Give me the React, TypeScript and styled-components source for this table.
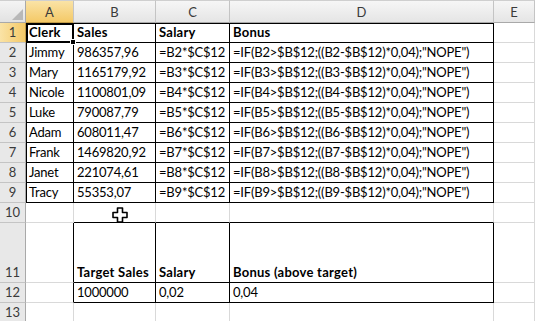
import React from "react";
import styled, { createGlobalStyle } from "styled-components";

const Global = createGlobalStyle`
  *, *::before, *::after { box-sizing: border-box; }
  html, body { margin: 0; padding: 0; background: #fff; overflow: hidden; }
  body { font-family: Lato, "Liberation Sans", sans-serif; }
`;

const GRID = "#d9d9d9";
const BLACK = "#000";
const HEAD_LINE = "#c4c4c4";
const HEAD_EDGE = "#a9a9a9";

const Sheet = styled.div`
  display: grid;
  grid-template-columns: 26px 48px 82px 74px 264px 1fr;
  grid-template-rows: 23px repeat(10, 20px) 60px 20px 20px;
  width: 535px;
  height: 321px;
  overflow: hidden;
  font-size: 13px;
  color: #000;
`;

const Corner = styled.div`
  position: relative;
  background: linear-gradient(#f4f4f4, #e2e2e2);
  border-top: 1px solid #cfcfcf;
  border-right: 1px solid ${HEAD_EDGE};
  border-bottom: 1px solid ${HEAD_EDGE};
  &::after {
    content: "";
    position: absolute;
    right: 2px;
    bottom: 2px;
    width: 0;
    height: 0;
    border-left: 11px solid transparent;
    border-bottom: 11px solid #b8b8b8;
  }
`;

const ColHeader = styled.div<{ $active?: boolean }>`
  display: flex;
  align-items: center;
  justify-content: center;
  padding-top: 1px;
  background: ${(p) =>
    p.$active
      ? "linear-gradient(#fae3a6, #f4c967)"
      : "linear-gradient(#f6f6f6, #e5e5e5)"};
  border-top: 1px solid #cfcfcf;
  border-right: 1px solid ${HEAD_LINE};
  border-bottom: 1px solid ${(p) => (p.$active ? "#c29b46" : HEAD_EDGE)};
  color: #3a3a3a;
  font-size: 13px;
`;

const RowHeader = styled.div<{ $active?: boolean }>`
  display: flex;
  align-items: flex-end;
  justify-content: center;
  padding-bottom: 2px;
  background: ${(p) =>
    p.$active ? "linear-gradient(90deg, #fae3a6, #f4c967)" : "#e8e8e8"};
  border-right: 1px solid ${(p) => (p.$active ? "#c29b46" : HEAD_EDGE)};
  border-bottom: 1px solid ${HEAD_LINE};
  color: #3a3a3a;
  font-size: 13px;
`;

const Cell = styled.div<{
  $r: string;
  $b: string;
  $t?: boolean;
  $l?: boolean;
  $bold?: boolean;
}>`
  position: relative;
  display: flex;
  align-items: flex-end;
  min-width: 0;
  padding: 0 3px 2px 3px;
  line-height: 15px;
  white-space: nowrap;
  border-right: 1px solid ${(p) => p.$r};
  border-bottom: 1px solid ${(p) => p.$b};
  box-shadow: ${(p) => {
    const s: string[] = [];
    if (p.$t) s.push(`inset 0 1px 0 ${BLACK}`);
    if (p.$l) s.push(`inset 1px 0 0 ${BLACK}`);
    return s.length ? s.join(", ") : "none";
  }};
  font-weight: ${(p) => (p.$bold ? 700 : 400)};
  letter-spacing: ${(p) => (p.$bold ? "0.25px" : "-0.2px")};
`;

const Selection = styled.span`
  position: absolute;
  left: 0;
  top: 0;
  right: -1px;
  bottom: -1px;
  border: 2px solid #000;
  pointer-events: none;
  z-index: 2;
`;

const FillHandle = styled.span`
  position: absolute;
  right: -3px;
  bottom: -3px;
  width: 6px;
  height: 6px;
  background: #000;
  border: 1px solid #fff;
  z-index: 3;
`;

const Cursor = styled.svg`
  position: absolute;
  left: 38px;
  top: 4px;
  z-index: 4;
`;

type CellData = { text?: string; bold?: boolean };

const cols = ["A", "B", "C", "D", "E"];

const names = ["Jimmy", "Mary", "Nicole", "Luke", "Adam", "Frank", "Janet", "Tracy"];
const sales = [
  "986357,96",
  "1165179,92",
  "1100801,09",
  "790087,79",
  "608011,47",
  "1469820,92",
  "221074,61",
  "55353,07",
];

const rows: CellData[][] = [];
rows.push([
  { text: "Clerk", bold: true },
  { text: "Sales", bold: true },
  { text: "Salary", bold: true },
  { text: "Bonus", bold: true },
  {},
]);
names.forEach((n, i) => {
  const r = i + 2;
  rows.push([
    { text: n },
    { text: sales[i] },
    { text: `=B${r}*$C$12` },
    { text: `=IF(B${r}>$B$12;((B${r}-$B$12)*0,04);"NOPE")` },
    {},
  ]);
});
rows.push([{}, {}, {}, {}, {}]);
rows.push([
  {},
  { text: "Target Sales", bold: true },
  { text: "Salary", bold: true },
  { text: "Bonus (above target)", bold: true },
  {},
]);
rows.push([{}, { text: "1000000" }, { text: "0,02" }, { text: "0,04" }, {}]);
rows.push([{}, {}, {}, {}, {}]);

function borders(row: number, col: number) {
  let r = GRID;
  let b = GRID;
  let t = false;
  let l = false;
  if (row >= 1 && row <= 9 && col <= 3) {
    r = BLACK;
    b = BLACK;
    if (row === 1) t = true;
    if (col === 0) l = true;
  }
  if (row === 10 && col >= 1 && col <= 3) b = BLACK;
  if ((row === 11 || row === 12) && col === 0) r = BLACK;
  if ((row === 11 || row === 12) && col >= 1 && col <= 3) {
    r = BLACK;
    b = BLACK;
  }
  return { r, b, t, l };
}

export default function App() {
  return (
    <>
      <Global />
      <Sheet>
        <Corner />
        {cols.map((c) => (
          <ColHeader key={c} $active={c === "A"}>
            {c}
          </ColHeader>
        ))}
        {rows.map((cells, ri) => {
          const row = ri + 1;
          return (
            <React.Fragment key={row}>
              <RowHeader $active={row === 1}>{row}</RowHeader>
              {cells.map((cell, ci) => {
                const bd = borders(row, ci);
                return (
                  <Cell
                    key={ci}
                    $r={bd.r}
                    $b={bd.b}
                    $t={bd.t}
                    $l={bd.l}
                    $bold={cell.bold}
                  >
                    {cell.text}
                    {row === 1 && ci === 0 && (
                      <>
                        <Selection />
                        <FillHandle />
                      </>
                    )}
                    {row === 10 && ci === 1 && (
                      <Cursor width="16" height="16" viewBox="0 0 16 16">
                        <path
                          d="M5.5 1 H10.5 V5.5 H15 V10.5 H10.5 V15 H5.5 V10.5 H1 V5.5 H5.5 Z"
                          fill="#fff"
                          stroke="#000"
                          strokeWidth="1.6"
                          strokeLinejoin="round"
                        />
                      </Cursor>
                    )}
                  </Cell>
                );
              })}
            </React.Fragment>
          );
        })}
      </Sheet>
    </>
  );
}
